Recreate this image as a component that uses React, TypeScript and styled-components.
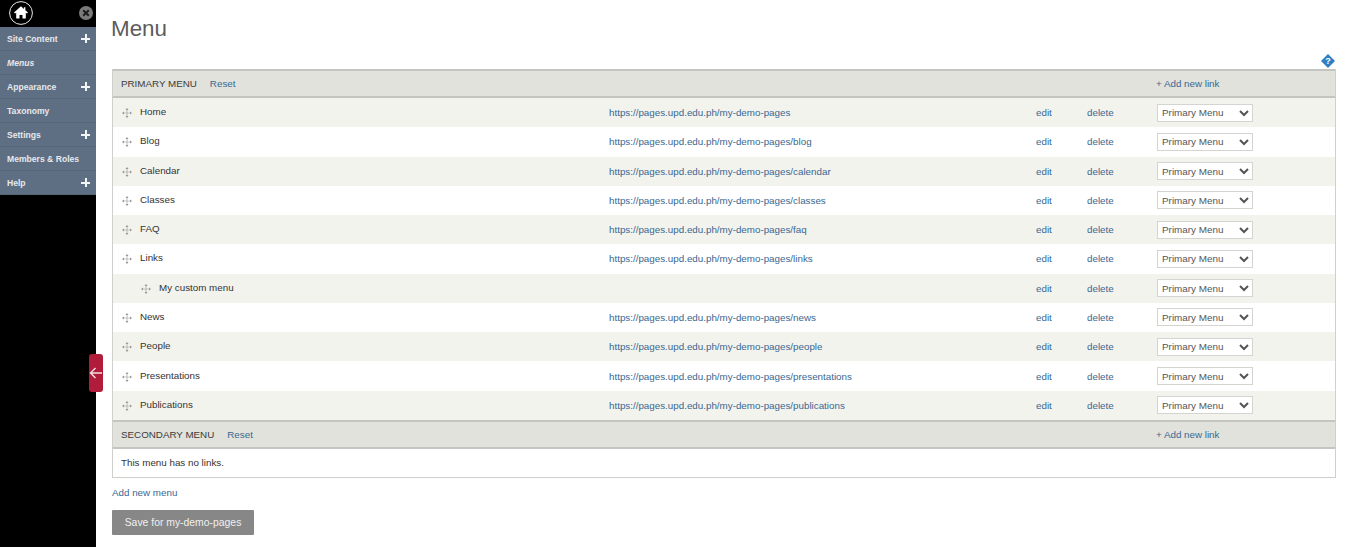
import React from 'react'
import styled, { createGlobalStyle } from 'styled-components'

const GlobalStyle = createGlobalStyle`
  html, body {
    margin: 0;
    height: 100%;
    background: #fff;
    overflow: hidden;
    font-family: "Liberation Sans", Arial, sans-serif;
  }
`

const Page = styled.div`
  display: flex;
  height: 547px;
`

const Sidebar = styled.aside`
  position: relative;
  flex: 0 0 96px;
  background: #000;
`

const SidebarTop = styled.div`
  display: flex;
  align-items: center;
  justify-content: space-between;
  height: 27px;
  padding: 0 3px 1px 9px;
  box-sizing: border-box;
`

const NavItem = styled.a<{ $active?: boolean }>`
  display: flex;
  align-items: center;
  justify-content: space-between;
  height: 24px;
  box-sizing: border-box;
  padding: 0 6px 0 7px;
  background: #5e6e83;
  border-bottom: 1px solid #566679;
  color: #e6e9ed;
  font-size: 8.6px;
  font-weight: 700;
  font-style: ${p => (p.$active ? 'italic' : 'normal')};
`

const Plus = styled.span`
  position: relative;
  width: 9px;
  height: 9px;
  background:
    linear-gradient(#f4f5f7, #f4f5f7) center / 9px 2px no-repeat,
    linear-gradient(#f4f5f7, #f4f5f7) center / 2px 9px no-repeat;
`

const CollapseTab = styled.button`
  position: absolute;
  top: 354px;
  left: 89px;
  width: 14px;
  height: 38px;
  padding: 0;
  border: 0;
  border-radius: 3px;
  background: #b11c3a;
  display: flex;
  align-items: center;
  justify-content: center;
`

const Main = styled.main`
  flex: 1;
  min-width: 0;
  padding: 17px 14px 0 16px;
`

const Title = styled.h1`
  margin: 0 0 0 -1px;
  color: #5c5c5c;
  font-size: 22.4px;
  line-height: 24px;
  font-weight: 400;
`

const HelpRow = styled.div`
  display: flex;
  justify-content: flex-end;
  height: 14px;
  margin: 13px 1px 0 0;
`

const Table = styled.section`
  margin-top: 1px;
  border: 1px solid #cfcfcb;
  border-top: 0;
`

const GroupHeader = styled.div`
  display: grid;
  grid-template-columns: 1fr 179px;
  align-items: center;
  height: 29px;
  box-sizing: border-box;
  padding-left: 8px;
  background: #e1e2dc;
  border-top: 2px solid #c4c4c0;
  border-bottom: 2px solid #c4c4c0;
  color: #3b3b3b;
  font-size: 9.8px;
`

const GroupName = styled.span`
  display: flex;
  gap: 13px;
`

const Link = styled.a`
  color: #396791;
  font-size: 9.8px;
`

const Row = styled.div<{ $odd: boolean }>`
  display: grid;
  grid-template-columns: 496px 427px 51px 70px 1fr;
  align-items: center;
  height: 29.27px;
  background: ${p => (p.$odd ? '#f3f3ee' : '#fff')};
  font-size: 9.8px;
  color: #333;
`

const Name = styled.span<{ $depth: number }>`
  display: flex;
  align-items: center;
  gap: 8px;
  padding-left: ${p => 9 + p.$depth * 19}px;
  margin-top: -2px;
`

const DragSvg = styled.svg`
  margin-top: 3px;
  fill: #969696;
`

const MenuSelect = styled.select`
  width: 96px;
  height: 18px;
  padding: 0;
  background: #fff;
  border: 1px solid #d4d4d0;
  border-radius: 0;
  color: #555;
  font-family: inherit;
  font-size: 9.9px;
`

const EmptyRow = styled.div`
  display: flex;
  align-items: center;
  height: 28px;
  padding-left: 8px;
  font-size: 9.8px;
  color: #333;
`

const AddMenu = styled(Link)`
  display: block;
  margin-top: 9px;
`

const SaveButton = styled.button`
  display: block;
  margin-top: 12px;
  width: 142px;
  height: 25px;
  padding: 0;
  border: 0;
  border-radius: 1px;
  background: #878787;
  color: #f0f0f0;
  font-family: inherit;
  font-size: 10.4px;
`

const HomeIcon = () => (
  <svg width="24" height="24" viewBox="0 0 24 24">
    <circle cx="12" cy="12" r="11.4" fill="#000" stroke="#e8e8e8" strokeWidth="1" />
    <path
      transform="translate(1.5 1.4) scale(0.875)"
      d="M12 4.5 L15.3 7.4 V5.5 H17 V8.9 L20 11.6 L18.8 12.8 L17.5 11.8 V18.5 H13.7 V14.5 H10.3 V18.5 H6.5 V11.8 L5.2 12.8 L4 11.6 Z"
      fill="#fff"
    />
  </svg>
)

const CloseIcon = () => (
  <svg width="14" height="14" viewBox="0 0 14 14">
    <circle cx="7" cy="7" r="7" fill="#7b7b7b" />
    <path d="M4.2 4.2 L9.8 9.8 M9.8 4.2 L4.2 9.8" stroke="#1c1c1c" strokeWidth="2" />
  </svg>
)

const DragIcon = () => (
  <DragSvg width="10" height="10" viewBox="0 0 10 10">
    <path d="M4.7 1.5 h.6 v7 h-.6 Z M1.5 4.7 h7 v.6 h-7 Z" />
    <path d="M5 0 L6.5 2 H3.5 Z M5 10 L3.5 8 H6.5 Z M0 5 L2 3.5 V6.5 Z M10 5 L8 6.5 V3.5 Z" />
  </DragSvg>
)

const HelpIcon = () => (
  <svg width="14" height="14" viewBox="0 0 14 14">
    <path d="M7 0 L14 7 L7 14 L0 7 Z" fill="#2f7fc4" />
    <text x="7" y="10" textAnchor="middle" fontSize="9" fontWeight="700" fill="#fff" fontFamily="Liberation Sans">?</text>
  </svg>
)

const nav = [
  { label: 'Site Content', plus: true },
  { label: 'Menus', active: true },
  { label: 'Appearance', plus: true },
  { label: 'Taxonomy' },
  { label: 'Settings', plus: true },
  { label: 'Members & Roles' },
  { label: 'Help', plus: true },
]

const base = 'https://pages.upd.edu.ph/my-demo-pages'
const links = [
  { name: 'Home', url: base },
  { name: 'Blog', url: `${base}/blog` },
  { name: 'Calendar', url: `${base}/calendar` },
  { name: 'Classes', url: `${base}/classes` },
  { name: 'FAQ', url: `${base}/faq` },
  { name: 'Links', url: `${base}/links` },
  { name: 'My custom menu', url: '', depth: 1 },
  { name: 'News', url: `${base}/news` },
  { name: 'People', url: `${base}/people` },
  { name: 'Presentations', url: `${base}/presentations` },
  { name: 'Publications', url: `${base}/publications` },
]

export default function App() {
  return (
    <Page>
      <GlobalStyle />
      <Sidebar>
        <SidebarTop>
          <HomeIcon />
          <CloseIcon />
        </SidebarTop>
        {nav.map(item => (
          <NavItem key={item.label} $active={item.active}>
            {item.label}
            {item.plus && <Plus />}
          </NavItem>
        ))}
        <CollapseTab aria-label="Collapse">
          <svg width="14" height="12" viewBox="0 0 14 12" fill="none" stroke="#f4dfe3" strokeWidth="1.4">
            <path d="M13 6 H1.5 M6.5 1 L1.5 6 L6.5 11" />
          </svg>
        </CollapseTab>
      </Sidebar>
      <Main>
        <Title>Menu</Title>
        <HelpRow>
          <HelpIcon />
        </HelpRow>
        <Table>
          <GroupHeader>
            <GroupName>
              PRIMARY MENU <Link>Reset</Link>
            </GroupName>
            <Link>+ Add new link</Link>
          </GroupHeader>
          {links.map((link, i) => (
            <Row key={link.name} $odd={i % 2 === 0}>
              <Name $depth={link.depth ?? 0}>
                <DragIcon />
                {link.name}
              </Name>
              <Link>{link.url}</Link>
              <Link>edit</Link>
              <Link>delete</Link>
              <MenuSelect defaultValue="primary">
                <option value="primary">Primary Menu</option>
              </MenuSelect>
            </Row>
          ))}
          <GroupHeader>
            <GroupName>
              SECONDARY MENU <Link>Reset</Link>
            </GroupName>
            <Link>+ Add new link</Link>
          </GroupHeader>
          <EmptyRow>This menu has no links.</EmptyRow>
        </Table>
        <AddMenu>Add new menu</AddMenu>
        <SaveButton>Save for my-demo-pages</SaveButton>
      </Main>
    </Page>
  )
}
